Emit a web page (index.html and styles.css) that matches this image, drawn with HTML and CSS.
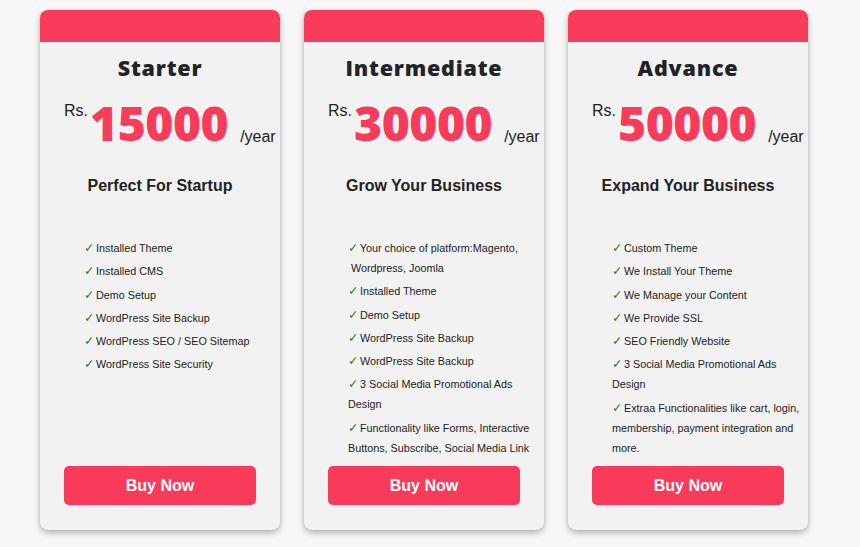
FILE: index.html
```html
<!DOCTYPE html>
<html>
<head>
<meta charset="utf-8">
<link rel="stylesheet" href="styles.css">
</head>
<body>
<div class="plans">
  <div class="card">
    <div class="band"></div>
    <h2 class="title">Starter</h2>
    <div class="price"><span class="cur">Rs.</span><span class="amt">15000</span><span class="per">/year</span></div>
    <h3 class="sub">Perfect For Startup</h3>
    <ul class="feats">
      <li><span class="ck">✓</span> Installed Theme</li>
      <li><span class="ck">✓</span> Installed CMS</li>
      <li><span class="ck">✓</span> Demo Setup</li>
      <li><span class="ck">✓</span> WordPress Site Backup</li>
      <li><span class="ck">✓</span> WordPress SEO / SEO Sitemap</li>
      <li><span class="ck">✓</span> WordPress Site Security</li>
    </ul>
    <button class="buy">Buy Now</button>
  </div>
  <div class="card">
    <div class="band"></div>
    <h2 class="title">Intermediate</h2>
    <div class="price"><span class="cur">Rs.</span><span class="amt">30000</span><span class="per">/year</span></div>
    <h3 class="sub">Grow Your Business</h3>
    <ul class="feats">
      <li><span class="ck">✓</span> Your choice of platform:Magento,<br>&nbsp;Wordpress, Joomla</li>
      <li><span class="ck">✓</span> Installed Theme</li>
      <li><span class="ck">✓</span> Demo Setup</li>
      <li><span class="ck">✓</span> WordPress Site Backup</li>
      <li><span class="ck">✓</span> WordPress Site Backup</li>
      <li><span class="ck">✓</span> 3 Social Media Promotional Ads Design</li>
      <li><span class="ck">✓</span> Functionality like Forms, Interactive Buttons, Subscribe, Social Media Link</li>
    </ul>
    <button class="buy">Buy Now</button>
  </div>
  <div class="card">
    <div class="band"></div>
    <h2 class="title">Advance</h2>
    <div class="price"><span class="cur">Rs.</span><span class="amt">50000</span><span class="per">/year</span></div>
    <h3 class="sub">Expand Your Business</h3>
    <ul class="feats">
      <li><span class="ck">✓</span> Custom Theme</li>
      <li><span class="ck">✓</span> We Install Your Theme</li>
      <li><span class="ck">✓</span> We Manage your Content</li>
      <li><span class="ck">✓</span> We Provide SSL</li>
      <li><span class="ck">✓</span> SEO Friendly Website</li>
      <li><span class="ck">✓</span> 3 Social Media Promotional Ads Design</li>
      <li><span class="ck">✓</span> Extraa Functionalities like cart, login, membership, payment integration and more.</li>
    </ul>
    <button class="buy">Buy Now</button>
  </div>
</div>
</body>
</html>
```
FILE: styles.css
```css
* { box-sizing: border-box; }
html, body { margin: 0; padding: 0; }
body {
  background: #f7f7f7;
  font-family: "Liberation Sans", Arial, sans-serif;
  color: #222;
  width: 860px;
  height: 547px;
  overflow: hidden;
}
.plans {
  display: flex;
  gap: 24px;
  padding: 10px 0 0 40px;
  align-items: stretch;
}
.card {
  width: 240px;
  height: 520px;
  background: #f2f2f2;
  border-radius: 8px;
  box-shadow: 0 3px 6px rgba(0,0,0,0.28), 0 0 3px rgba(0,0,0,0.08);
  display: flex;
  flex-direction: column;
  overflow: hidden;
}
.band {
  height: 32px;
  background: #f83b5b;
  flex: none;
}
.title {
  margin: 11px 0 0;
  font-family: "Open Sans", sans-serif;
  font-weight: 800;
  font-size: 21.5px;
  letter-spacing: 0.8px;
  line-height: 30px;
  text-align: center;
  color: #1f2428;
}
.price {
  display: flex;
  padding-left: 24px;
  margin-top: 10px;
  height: 60px;
  align-items: flex-start;
}
.cur {
  font-size: 16px;
  line-height: 18px;
  margin-top: 9px;
  color: #222;
}
.amt {
  font-family: "Open Sans", sans-serif;
  font-weight: 800;
  font-size: 48px;
  line-height: 48px;
  color: #f83b5b;
  margin-left: 2px;
  letter-spacing: -0.5px;
  margin-top: 6px;
}
.per {
  font-size: 16px;
  line-height: 18px;
  align-self: flex-end;
  margin-left: 12px;
  margin-bottom: 7px;
  color: #222;
}
.sub {
  margin: 23px 0 0;
  font-size: 16px;
  font-weight: 700;
  line-height: 20px;
  text-align: center;
  color: #222;
}
.feats {
  list-style: none;
  margin: 42px 0 0 44px;
  padding: 0;
  width: 192px;
  font-size: 10.8px;
  line-height: 20px;
  color: #222;
}
.feats li { margin-bottom: 3.3px; }
.ck {
  color: #237a23;
  font-size: 12.5px;
  font-weight: 700;
  line-height: 10px;
  margin-right: -1.5px;
  font-family: "DejaVu Sans", sans-serif;
}
.buy {
  margin: auto 24px 25px;
  height: 39px;
  border: none;
  border-radius: 5px;
  background: #f83b5b;
  color: #fff;
  font-family: "Liberation Sans", Arial, sans-serif;
  font-weight: 700;
  font-size: 16px;
  flex: none;
}
```
